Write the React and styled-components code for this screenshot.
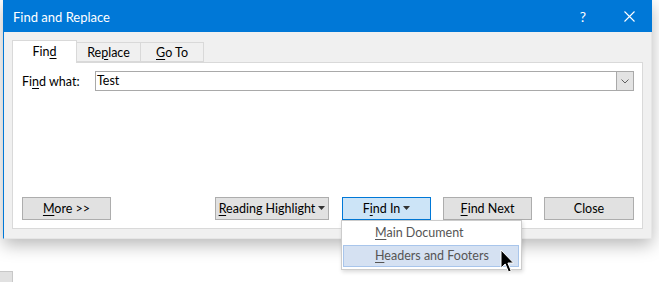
import React from "react";
import styled, { createGlobalStyle } from "styled-components";

const Global = createGlobalStyle`
  html, body { margin: 0; padding: 0; background: #ffffff; }
  body { font-family: "Segoe UI", Lato, "Noto Sans", sans-serif; font-size: 12.5px; color: #000; }
`;

const Page = styled.div`
  position: relative;
  width: 659px;
  height: 282px;
  overflow: hidden;
`;

const Window = styled.div`
  position: relative;
  margin-left: 3px;
  width: 649px;
  height: 239px;
  box-sizing: border-box;
  border: 1px solid #0078d7;
  border-top: 0;
  border-right-color: #e6e6e6;
  border-bottom-color: #e6e6e6;
  background: #f0f0f0;
  box-shadow: 0 6px 16px rgba(0, 0, 0, 0.28);
  display: flex;
  flex-direction: column;
`;

const TitleBar = styled.div`
  height: 32px;
  margin: 0 -1px 0 -1px;
  background: #0078d7;
  color: #fff;
  display: flex;
  align-items: center;
  padding-left: 10px;
  font-size: 13px;
`;

const TitleText = styled.div`
  flex: 1;
  padding-top: 1px;
`;

const TitleBtn = styled.div`
  width: 46px;
  height: 32px;
  display: flex;
  align-items: center;
  justify-content: center;
  color: #fff;
  font-size: 14px;
`;

const Body = styled.div`
  flex: 1;
  padding: 8px 8px 9px 8px;
  display: flex;
  flex-direction: column;
`;

const Tabs = styled.div`
  display: flex;
  align-items: flex-end;
  height: 22px;
`;

const Tab = styled.div`
  box-sizing: border-box;
  width: ${(p) => p.$w}px;
  height: ${(p) => (p.$active ? 23 : 20)}px;
  margin-bottom: ${(p) => (p.$active ? -1 : 0)}px;
  background: ${(p) => (p.$active ? "#fff" : "#f0f0f0")};
  border: 1px solid #d9d9d9;
  border-bottom: ${(p) => (p.$active ? "0" : "1px solid #d9d9d9")};
  border-left: ${(p) => (p.$first || p.$active ? "1px solid #d9d9d9" : "0")};
  display: flex;
  align-items: center;
  justify-content: center;
  padding-bottom: ${(p) => (p.$active ? 2 : 0)}px;
  position: relative;
  z-index: ${(p) => (p.$active ? 1 : 0)};
  color: #000;
`;

const U = styled.span`
  text-decoration: underline;
  text-underline-offset: 2px;
`;

const Panel = styled.div`
  flex: 1;
  background: #fff;
  border: 1px solid #d9d9d9;
  display: flex;
  flex-direction: column;
  justify-content: space-between;
  padding: 8px 8px 8px 9px;
`;

const FieldRow = styled.div`
  display: flex;
  align-items: center;
`;

const Label = styled.div`
  width: 73px;
`;

const Input = styled.div`
  flex: 1;
  height: 20px;
  box-sizing: border-box;
  border: 1px solid #a9a9a9;
  border-right: 0;
  display: flex;
  align-items: center;
  padding-left: 1px;
`;

const InputText = styled.div`
  flex: 1;
  padding-bottom: 1px;
`;

const DropBtn = styled.div`
  width: 18px;
  height: 20px;
  box-sizing: border-box;
  background: #e3e3e3;
  border: 1px solid #a9a9a9;
  display: flex;
  align-items: center;
  justify-content: center;
`;

const ButtonRow = styled.div`
  display: flex;
  align-items: center;
`;

const Spacer = styled.div`
  flex: 1;
`;

const Btn = styled.div`
  position: relative;
  box-sizing: border-box;
  width: ${(p) => p.$w}px;
  height: 23px;
  margin-left: ${(p) => p.$ml || 0}px;
  background: ${(p) => (p.$active ? "#cce4f7" : "#e1e1e1")};
  border: 1px solid ${(p) => (p.$active ? "#0078d7" : "#adadad")};
  display: flex;
  align-items: center;
  justify-content: center;
  gap: 3px;
  padding-bottom: 1px;
`;

const Menu = styled.div`
  position: absolute;
  left: -2px;
  top: 22px;
  width: 181px;
  box-sizing: border-box;
  background: #fff;
  border: 1px solid #cccccc;
  box-shadow: 1px 2px 4px rgba(0, 0, 0, 0.15);
  padding: 1px 2px 2px 1px;
  z-index: 5;
`;

const MenuItem = styled.div`
  height: 22px;
  box-sizing: border-box;
  display: flex;
  align-items: center;
  padding-left: 31px;
  padding-bottom: 1px;
  color: #555555;
  background: ${(p) => (p.$hl ? "#d5e1f2" : "transparent")};
  border: 1px solid ${(p) => (p.$hl ? "#a8c5eb" : "transparent")};
  margin-top: ${(p) => (p.$hl ? 1 : 0)}px;
`;

const Cursor = styled.svg`
  position: absolute;
  left: 500px;
  top: 249px;
  z-index: 10;
`;

const Stub = styled.div`
  width: 13px;
  height: 11px;
  margin-top: 32px;
  box-sizing: border-box;
  background: #e1e1e1;
  border: 1px solid #c8c8c8;
  border-left: 0;
  border-bottom: 0;
`;

const Caret = () => (
  <svg width="7" height="4" viewBox="0 0 7 4">
    <path d="M0 0 H7 L3.5 4 Z" fill="#333" />
  </svg>
);

export default function App() {
  return (
    <Page>
      <Global />
      <Window>
        <TitleBar>
          <TitleText>Find and Replace</TitleText>
          <TitleBtn>?</TitleBtn>
          <TitleBtn>
            <svg width="11" height="11" viewBox="0 0 11 11">
              <path d="M0.5 0.5 L10.5 10.5 M10.5 0.5 L0.5 10.5" stroke="#fff" strokeWidth="1.1" />
            </svg>
          </TitleBtn>
        </TitleBar>
        <Body>
          <Tabs>
            <Tab $w={65} $active $first>
              Fin<U>d</U>
            </Tab>
            <Tab $w={64}>
              Re<U>p</U>lace
            </Tab>
            <Tab $w={63}>
              <U>G</U>o To
            </Tab>
          </Tabs>
          <Panel>
            <FieldRow>
              <Label>
                Fi<U>n</U>d what:
              </Label>
              <Input>
                <InputText>Test</InputText>
                <DropBtn>
                  <svg width="8" height="5" viewBox="0 0 8 5">
                    <path d="M0.5 0.5 L4 4 L7.5 0.5" stroke="#606060" strokeWidth="1" fill="none" />
                  </svg>
                </DropBtn>
              </Input>
            </FieldRow>
            <ButtonRow>
              <Btn $w={89}>
                <span>
                  <U>M</U>ore &gt;&gt;
                </span>
              </Btn>
              <Spacer />
              <Btn $w={114}>
                <span>
                  <U>R</U>eading Highlight
                </span>
                <Caret />
              </Btn>
              <Btn $w={89} $ml={13} $active>
                <span>
                  F<U>i</U>nd In
                </span>
                <Caret />
                <Menu>
                  <MenuItem>
                    <span>
                      <U>M</U>ain Document
                    </span>
                  </MenuItem>
                  <MenuItem $hl>
                    <span>
                      <U>H</U>eaders and Footers
                    </span>
                  </MenuItem>
                </Menu>
              </Btn>
              <Btn $w={89} $ml={12}>
                <span>
                  <U>F</U>ind Next
                </span>
              </Btn>
              <Btn $w={90} $ml={12}>
                Close
              </Btn>
            </ButtonRow>
          </Panel>
        </Body>
      </Window>
      <Stub />
      <Cursor width="15" height="25" viewBox="0 0 15 25">
        <path
          d="M1 1 L1 19 L5.2 15 L8.5 23 L11.2 21.8 L7.9 14 L13.5 14 Z"
          fill="#000"
          stroke="#fff"
          strokeWidth="1"
          strokeLinejoin="miter"
        />
      </Cursor>
    </Page>
  );
}
